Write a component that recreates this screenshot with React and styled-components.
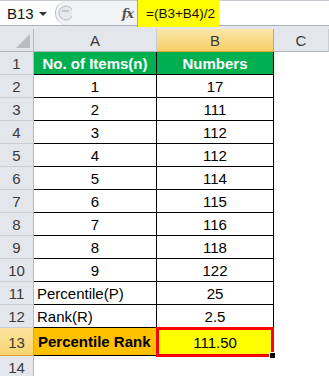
import styled, { createGlobalStyle, css } from "styled-components";

const GlobalStyle = createGlobalStyle`
  html, body {
    margin: 0;
    padding: 0;
    background: #ffffff;
  }
  body {
    font-family: "Liberation Sans", Arial, sans-serif;
    overflow: hidden;
  }
`;

const rows = [
  { n: 2, a: "1", b: "17" },
  { n: 3, a: "2", b: "111" },
  { n: 4, a: "3", b: "112" },
  { n: 5, a: "4", b: "112" },
  { n: 6, a: "5", b: "114" },
  { n: 7, a: "6", b: "115" },
  { n: 8, a: "7", b: "116" },
  { n: 9, a: "8", b: "118" },
  { n: 10, a: "9", b: "122" },
];

const Sheet = styled.div`
  width: 329px;
  height: 376px;
  background: #ffffff;
  overflow: hidden;
  font-size: 14px;
  color: #000;
`;

// formula bar
const FormulaBar = styled.div`
  display: flex;
  height: 24px;
  border-top: 1px solid #c6cbd2;
  border-bottom: 1px solid #a9b0ba;
  background: #ffffff;
`;

const NameBox = styled.div`
  width: 55px;
  display: flex;
  align-items: center;
  justify-content: space-between;
  padding: 0 8px 0 7px;
  box-sizing: border-box;
  font-size: 15px;
  color: #111;
`;

const Caret = styled.span`
  width: 0;
  height: 0;
  border-left: 4px solid transparent;
  border-right: 4px solid transparent;
  border-top: 4px solid #333;
  margin-top: 2px;
`;

const Splitter = styled.div`
  width: 82px;
  display: flex;
  align-items: center;
  justify-content: space-between;
  background: #f2f3f5;
  border-radius: 12px 0 0 12px;
  border-left: 1px solid #b8bec7;
  padding: 0 4px 0 2px;
  box-sizing: border-box;
`;

const Fx = styled.span`
  font-family: "DejaVu Serif", "Liberation Serif", serif;
  font-style: italic;
  font-weight: bold;
  font-size: 13px;
  color: #555;
  letter-spacing: -1px;
`;

const FormulaText = styled.div`
  width: 82px;
  margin-top: -1px;
  height: 27px;
  background: #ffff00;
  border-left: 1px solid #b8b800;
  display: flex;
  align-items: center;
  padding-left: 8px;
  box-sizing: border-box;
  font-size: 13.5px;
  white-space: nowrap;
  color: #111;
`;

const Gap = styled.div`
  height: 3px;
  background: #e3e6ea;
`;

// grid
const Row = styled.div`
  display: flex;
  height: ${(p) => p.h}px;
`;

const RowHead = styled.div`
  width: 34px;
  flex: none;
  box-sizing: border-box;
  display: flex;
  align-items: ${(p) => (p.active ? "flex-end" : "center")};
  padding-bottom: ${(p) => (p.active ? "4px" : "0")};
  justify-content: center;
  font-size: 15px;
  color: #3a3a3a;
  background: #e3e6ea;
  border-right: 1px solid #b2b8c1;
  border-bottom: 1px solid #c9ced5;
  ${(p) =>
    p.active &&
    css`
      background: linear-gradient(#fbe4a0, #f8d56f);
      border-right: 1px solid #e0a13c;
      border-bottom: 1px solid #e0a13c;
    `}
`;

const ColHead = styled.div`
  width: ${(p) => p.w}px;
  flex: ${(p) => (p.grow ? 1 : "none")};
  box-sizing: border-box;
  display: flex;
  align-items: center;
  justify-content: center;
  font-size: 15px;
  color: #3a3a3a;
  background: #e3e6ea;
  border-right: 1px solid #c9ced5;
  border-bottom: 1px solid #b2b8c1;
  ${(p) =>
    p.active &&
    css`
      background: linear-gradient(#fbe7a8, #f6cf66);
      border-right: 1px solid #e0a13c;
      border-bottom: 1px solid #e0a13c;
    `}
`;

const Corner = styled.div`
  width: 34px;
  flex: none;
  box-sizing: border-box;
  background: #e3e6ea;
  border-right: 1px solid #b2b8c1;
  border-bottom: 1px solid #b2b8c1;
  display: flex;
  align-items: flex-end;
  justify-content: flex-end;
  padding: 0 3px 3px 0;
`;

const Cell = styled.div`
  width: ${(p) => p.w}px;
  flex: none;
  box-sizing: border-box;
  display: flex;
  align-items: center;
  justify-content: ${(p) => (p.left ? "flex-start" : "center")};
  padding-left: ${(p) => (p.left ? "3px" : "0")};
  font-size: 15px;
  white-space: nowrap;
  border-right: 1px solid #000;
  border-bottom: 1px solid #000;
  ${(p) =>
    p.kind === "green" &&
    css`
      background: #00b050;
      color: #fff;
      font-weight: bold;
    `}
  ${(p) =>
    p.kind === "orange" &&
    css`
      background: #ffc000;
      font-weight: bold;
      padding-left: 4px;
      align-items: flex-end;
      padding-bottom: 5px;
    `}
`;

const Selected = styled.div`
  width: 118px;
  flex: none;
  position: relative;
  box-sizing: border-box;
  margin: -1px 0 -1px -1px;
  background: #ffff00;
  border: 3px solid #ff0000;
  display: flex;
  align-items: flex-end;
  justify-content: center;
  font-size: 15px;
  padding-bottom: 3px;
`;

const Handle = styled.span`
  position: absolute;
  right: -5px;
  bottom: -5px;
  width: 5px;
  height: 5px;
  background: #000;
  border: 1px solid #fff;
`;

const Blank = styled.div`
  flex: 1;
`;

const App = () => (
  <Sheet>
    <GlobalStyle />
    <FormulaBar>
      <NameBox>
        B13
        <Caret />
      </NameBox>
      <Splitter>
        <svg width="14" height="18" viewBox="0 0 14 18">
          <circle cx="8" cy="9" r="7" fill="#e6e8eb" stroke="#b5bbc3" />
          <path d="M4 7 h7" stroke="#c0c4ca" strokeWidth="2" />
        </svg>
        <Fx>fx</Fx>
      </Splitter>
      <FormulaText>=(B3+B4)/2</FormulaText>
      <Blank />
    </FormulaBar>
    <Gap />
    <Row h={23}>
      <Corner>
        <svg width="14" height="14" viewBox="0 0 14 14">
          <path d="M14 0 L14 14 L0 14 Z" fill="#b9bdc3" />
        </svg>
      </Corner>
      <ColHead w={123}>A</ColHead>
      <ColHead w={117} active>
        B
      </ColHead>
      <ColHead grow>C</ColHead>
    </Row>
    <Row h={23}>
      <RowHead>1</RowHead>
      <Cell w={123} kind="green">
        No. of Items(n)
      </Cell>
      <Cell w={117} kind="green">
        Numbers
      </Cell>
      <Blank />
    </Row>
    {rows.map((r) => (
      <Row h={23} key={r.n}>
        <RowHead>{r.n}</RowHead>
        <Cell w={123}>{r.a}</Cell>
        <Cell w={117}>{r.b}</Cell>
        <Blank />
      </Row>
    ))}
    <Row h={23}>
      <RowHead>11</RowHead>
      <Cell w={123} left>
        Percentile(P)
      </Cell>
      <Cell w={117}>25</Cell>
      <Blank />
    </Row>
    <Row h={23}>
      <RowHead>12</RowHead>
      <Cell w={123} left>
        Rank(R)
      </Cell>
      <Cell w={117}>2.5</Cell>
      <Blank />
    </Row>
    <Row h={28}>
      <RowHead active>13</RowHead>
      <Cell w={123} kind="orange" left>
        Percentile Rank
      </Cell>
      <Selected>
        111.50
        <Handle />
      </Selected>
      <Blank />
    </Row>
    <Row h={24}>
      <RowHead>14</RowHead>
      <Blank />
    </Row>
  </Sheet>
);

export default App;
